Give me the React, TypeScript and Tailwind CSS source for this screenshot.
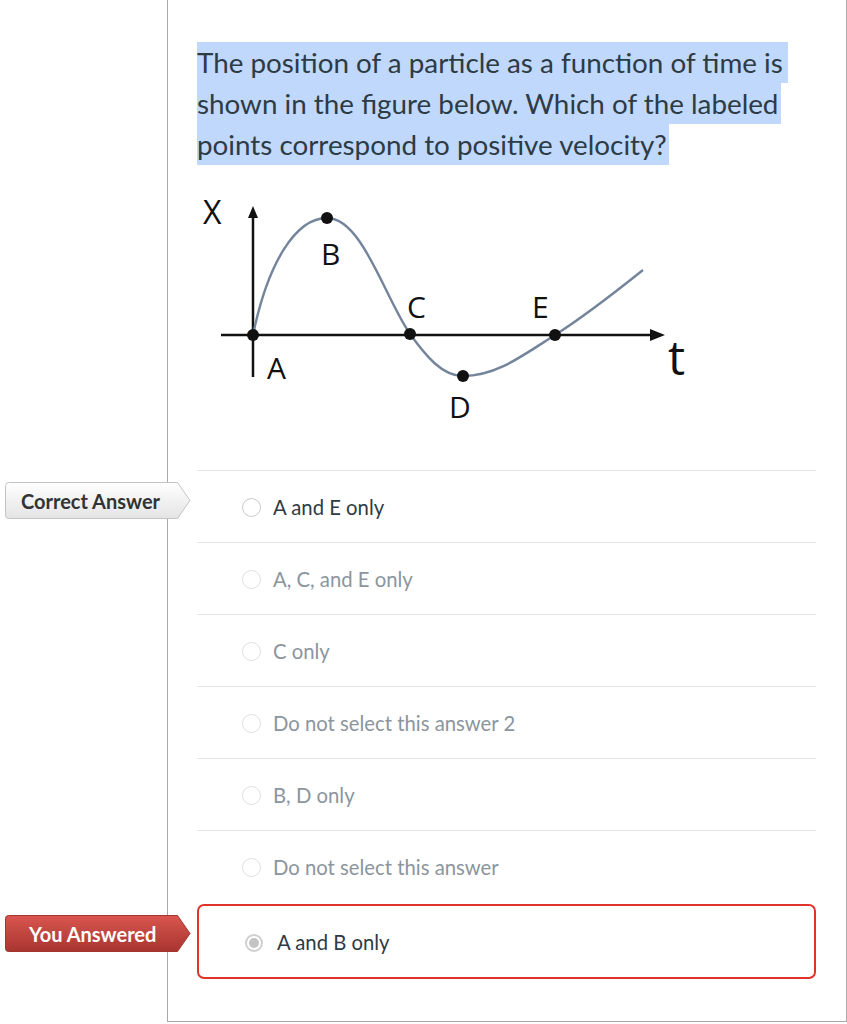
import React from 'react';

type Answer = { text: string; tone: 'strong' | 'muted' };

const answers: Answer[] = [
  { text: 'A and E only', tone: 'strong' },
  { text: 'A, C, and E only', tone: 'muted' },
  { text: 'C only', tone: 'muted' },
  { text: 'Do not select this answer 2', tone: 'muted' },
  { text: 'B, D only', tone: 'muted' },
  { text: 'Do not select this answer', tone: 'muted' },
];

function Badge({ label, variant, className }: { label: string; variant: 'correct' | 'wrong'; className: string }) {
  const correct = variant === 'correct';
  const id = correct ? 'gradCorrect' : 'gradWrong';
  return (
    <div className={`absolute w-[186px] h-[37px] ${className}`}>
      <svg width="186" height="37" viewBox="0 0 186 37" className="absolute inset-0">
        <defs>
          <linearGradient id={id} x1="0" y1="0" x2="0" y2="1">
            {correct ? (
              <>
                <stop offset="0%" stopColor="#ffffff" />
                <stop offset="100%" stopColor="#e4e4e4" />
              </>
            ) : (
              <>
                <stop offset="0%" stopColor="#d9564f" />
                <stop offset="100%" stopColor="#a8352f" />
              </>
            )}
          </linearGradient>
        </defs>
        <path
          d="M3.5 0.5 H172.5 L185 18.5 L172.5 36.5 H3.5 Q0.5 36.5 0.5 33.5 V3.5 Q0.5 0.5 3.5 0.5 Z"
          fill={`url(#${id})`}
          stroke={correct ? '#c4c4c4' : '#a3332d'}
          strokeWidth="1"
        />
      </svg>
      <div
        className={`relative flex h-full items-center text-[20px] font-bold font-['Lato','Noto_Sans',sans-serif] ${
          correct ? 'pl-[16px] text-[#333333]' : 'pl-[24px] text-white'
        }`}
      >
        {label}
      </div>
    </div>
  );
}

function Radio({ checked, muted }: { checked?: boolean; muted?: boolean }) {
  if (checked) {
    return (
      <span className="flex h-[18px] w-[18px] items-center justify-center rounded-full border-2 border-[#cfcfcf] bg-white">
        <span className="h-[10px] w-[10px] rounded-full bg-[#c4c4c4]" />
      </span>
    );
  }
  return (
    <span
      className={`h-[19px] w-[19px] rounded-full border bg-white ${
        muted ? 'border-[#e0e0e0]' : 'border-[#c9c9c9]'
      }`}
    />
  );
}

function Graph() {
  return (
    <svg width="510" height="240" viewBox="200 190 510 240" className="block">
      {/* axes */}
      <line x1="253" y1="377" x2="253" y2="214" stroke="#111" strokeWidth="2.5" />
      <path d="M253 206 L248 218 L258 218 Z" fill="#111" />
      <line x1="221" y1="335" x2="655" y2="335" stroke="#111" strokeWidth="2.5" />
      <path d="M665 335 L650 329 L650 341 Z" fill="#111" />
      {/* curve */}
      <path
        d="M253 335 C268 262 296 218 327 218 C362 218 384 296 410 334 C426 356 442 376 463 376 C496 376 522 356 555 335 C588 314 618 290 643 270"
        fill="none"
        stroke="#73849b"
        strokeWidth="2.4"
      />
      {/* points */}
      <circle cx="253" cy="335" r="6" fill="#111" />
      <circle cx="327" cy="218" r="6" fill="#111" />
      <circle cx="410" cy="334" r="6" fill="#111" />
      <circle cx="463" cy="376" r="6" fill="#111" />
      <circle cx="555" cy="335" r="6" fill="#111" />
      <g fontFamily="'Open Sans', 'DejaVu Sans', sans-serif" fill="#111">
        <text x="203" y="224" fontSize="32">X</text>
        <text x="267" y="379" fontSize="30">A</text>
        <text x="321" y="265" fontSize="30">B</text>
        <text x="407" y="318" fontSize="30">C</text>
        <text x="532" y="318" fontSize="30">E</text>
        <text x="449" y="418" fontSize="30">D</text>
        <text x="668" y="375" fontSize="48">t</text>
      </g>
    </svg>
  );
}

export default function App() {
  return (
    <div className="relative min-h-[1024px] bg-white font-['Lato','Noto_Sans',sans-serif]">
      <div className="ml-[167px] w-[680px] border-x border-b border-[#a9a9a9] px-[29px] pt-[42px] pb-[42px]">
        <div className="text-[27.8px] leading-[41px] text-[#2d3b45]">
          <div><span className="inline-block bg-[#bfd8fb] pr-[5px]">The position of a particle as a function of time is</span></div>
          <div><span className="inline-block bg-[#bfd8fb] pr-[3px]">shown in the figure below. Which of the labeled</span></div>
          <div><span className="inline-block bg-[#bfd8fb] pr-[2px]">points correspond to positive velocity?</span></div>
        </div>

        <div className="mt-[25px] ml-[3px]">
          <Graph />
        </div>

        <div className="mt-[40px] mr-[1px]">
          {answers.map((a, i) => (
            <div
              key={a.text}
              className="relative flex h-[72px] items-center gap-[12px] border-t border-[#e6e6e6] pl-[45px] pt-[2px]"
            >
              {i === 0 && <Badge label="Correct Answer" variant="correct" className="left-[-192px] top-[11px]" />}
              <Radio muted={a.tone === 'muted'} />
              <span
                className={`text-[20.3px] ${a.tone === 'strong' ? 'text-[#2d3b45]' : 'text-[#8b959e]'}`}
              >
                {a.text}
              </span>
            </div>
          ))}
          <div className="relative mt-[2px] flex h-[75px] items-center gap-[14px] rounded-[7px] border-2 border-[#e2332b] pl-[46px] pt-[2px]">
            <Badge label="You Answered" variant="wrong" className="left-[-194px] top-[9px]" />
            <Radio checked />
            <span className="text-[20.3px] text-[#2d3b45]">A and B only</span>
          </div>
        </div>
      </div>
    </div>
  );
}
